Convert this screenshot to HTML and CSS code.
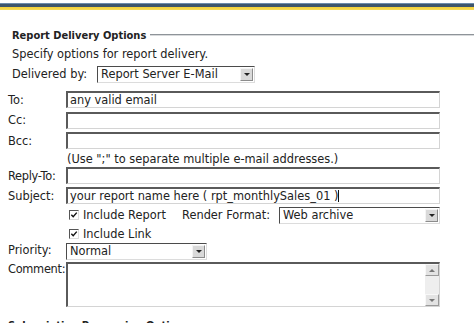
FILE: index.html
```html
<!DOCTYPE html>
<html lang="en">
<head>
  <meta charset="UTF-8">
  <title>Report Delivery Options</title>
  <link rel="stylesheet" href="styles.css">
</head>
<body>
  <div class="topbar"></div>

  <div class="options">
    <div class="legend">
      <span class="legend-title">Report Delivery Options</span>
      <span class="legend-rule"></span>
    </div>
    <div class="intro">Specify options for report delivery.</div>
    <div class="delivered">
      <span class="delivered-label">Delivered by:</span>
      <div class="select select-ext">
        <span class="select-value">Report Server E-Mail</span>
        <span class="select-btn"><span class="arrow"></span></span>
      </div>
    </div>
  </div>

  <div class="fields">
    <div class="row row-to">
      <span class="label">To:</span>
      <div class="field">any valid email</div>
    </div>
    <div class="row row-cc">
      <span class="label">Cc:</span>
      <div class="field"></div>
    </div>
    <div class="row row-bcc">
      <span class="label">Bcc:</span>
      <div class="field"></div>
    </div>
    <div class="row row-note">
      <span class="label"></span>
      <span class="note">(Use ";" to separate multiple e-mail addresses.)</span>
    </div>
    <div class="row row-reply">
      <span class="label tight">Reply-To:</span>
      <div class="field"></div>
    </div>
    <div class="row row-subject">
      <span class="label">Subject:</span>
      <div class="field">your report name here ( rpt_monthlySales_01 )<span class="caret"></span></div>
    </div>
    <div class="row row-check">
      <span class="label"></span>
      <span class="check"><svg viewBox="0 0 9 9" width="9" height="9"><path d="M1.5 4.2 L3.6 6.4 L7.6 1.8" fill="none" stroke="#111" stroke-width="1.6"/></svg></span>
      <span class="check-text check-report">Include Report</span>
      <span class="render-label">Render Format:</span>
      <div class="select select-format">
        <span class="select-value">Web archive</span>
        <span class="select-btn"><span class="arrow"></span></span>
      </div>
    </div>
    <div class="row row-check2">
      <span class="label"></span>
      <span class="check"><svg viewBox="0 0 9 9" width="9" height="9"><path d="M1.5 4.2 L3.6 6.4 L7.6 1.8" fill="none" stroke="#111" stroke-width="1.6"/></svg></span>
      <span class="check-text">Include Link</span>
    </div>
    <div class="row row-priority">
      <span class="label">Priority:</span>
      <div class="select select-priority">
        <span class="select-value">Normal</span>
        <span class="select-btn"><span class="arrow"></span></span>
      </div>
    </div>
    <div class="row row-comment">
      <span class="label tight">Comment:</span>
      <div class="textarea">
        <div class="scroll">
          <span class="scroll-btn"><span class="arrow up"></span></span>
          <span class="scroll-track"></span>
          <span class="scroll-btn"><span class="arrow"></span></span>
        </div>
      </div>
    </div>
    <div class="next-section">Subscription Processing Options</div>
  </div>
</body>
</html>
```

FILE: styles.css
```css
* {
  box-sizing: border-box;
  margin: 0;
  padding: 0;
}
html, body {
  width: 474px;
  height: 323px;
  overflow: hidden;
  background: #fff;
}
body {
  font-family: "DejaVu Sans", Verdana, sans-serif;
  font-size: 11.4px;
  color: #222;
}
/* Top stripe */
.topbar {
  height: 10px;
  border-top: 3px solid #fff;
  background: linear-gradient(#6d8bab 0, #6d8bab 1px, #3e566c 1px, #3e566c 4px, #f3cf35 4px, #f7dc5a 7px);
}
/* Legend block */
.options {
  padding-left: 12px;
}
.legend {
  display: flex;
  align-items: center;
  height: 20px;
  margin-top: 15px;
}
.legend-title {
  font-family: "DejaVu Sans Condensed", "DejaVu Sans", sans-serif;
  font-weight: bold;
  font-size: 11px;
}
.legend-rule {
  flex: 1;
  height: 2px;
  margin-left: 4px;
  border-top: 1px solid #8e9499;
  border-bottom: 1px solid #d8dadc;
}
.intro {
  height: 18px;
  line-height: 18px;
}
.delivered {
  display: flex;
  align-items: center;
  height: 22px;
}
.delivered-label {
  width: 85px;
}
/* Fake selects */
.select {
  display: flex;
  height: 17px;
  border-top: 1px solid #4b4b4b;
  border-left: 1px solid #4b4b4b;
  border-right: 1px solid #dcdcdc;
  border-bottom: 1px solid #dcdcdc;
  background: #fff;
}
.select-value {
  flex: 1;
  padding-left: 3px;
  line-height: 15px;
  white-space: nowrap;
}
.select-btn {
  width: 13px;
  margin: 1px;
  background: #d9d9d9;
  border: 1px solid #f4f4f4;
  border-right-color: #8c8c8c;
  border-bottom-color: #8c8c8c;
  display: flex;
  align-items: center;
  justify-content: center;
}
.arrow {
  width: 0;
  height: 0;
  border-left: 3px solid transparent;
  border-right: 3px solid transparent;
  border-top: 3px solid #222;
}
.arrow.up {
  border-top: 0;
  border-bottom: 3px solid #777;
}
.select-ext {
  width: 158px;
}
.select-format {
  width: 161px;
}
.select-priority {
  width: 141px;
}
/* Form rows */
.fields {
  padding-left: 8px;
  margin-top: 4px;
}
.row {
  display: flex;
  align-items: center;
}
.label {
  width: 58px;
  flex-shrink: 0;
  white-space: nowrap;
}
.label.tight {
  letter-spacing: -0.3px;
}
.field {
  width: 374px;
  height: 17px;
  padding-left: 2px;
  line-height: 15px;
  border-top: 2px solid #5a5a5a;
  border-left: 2px solid #5a5a5a;
  border-right: 1px solid #d4d4d4;
  border-bottom: 1px solid #d4d4d4;
  white-space: nowrap;
}
.caret {
  display: inline-block;
  width: 1px;
  height: 12px;
  background: #111;
  vertical-align: -2px;
}
.row-to { height: 21px; }
.row-cc { height: 20px; }
.row-bcc { height: 21px; }
.row-note { height: 15px; }
.row-note .note { margin-left: 1px; }
.row-reply { height: 19px; }
.row-subject { height: 21px; }
.row-check { height: 18px; }
.row-check2 { height: 19px; }
.row-priority { height: 18px; align-items: flex-start; }
.check {
  width: 10px;
  height: 10px;
  margin-left: 3px;
  border-top: 1px solid #555;
  border-left: 1px solid #555;
  border-right: 1px solid #ddd;
  border-bottom: 1px solid #ddd;
  display: flex;
  align-items: center;
  justify-content: center;
}
.check svg {
  width: 8px;
  height: 8px;
}
.check-text {
  margin-left: 4px;
}
.check-report {
  width: 99px;
}
.render-label {
  width: 97px;
  white-space: nowrap;
}
/* Comment box */
.row-comment {
  align-items: flex-start;
  height: 45px;
  margin-top: 1px;
}
.textarea {
  width: 374px;
  height: 45px;
  border-top: 2px solid #5a5a5a;
  border-left: 2px solid #5a5a5a;
  border-right: 1px solid #d4d4d4;
  border-bottom: 1px solid #d4d4d4;
  display: flex;
  justify-content: flex-end;
}
.scroll {
  width: 14px;
  display: flex;
  flex-direction: column;
  background: #eeeeee;
}
.scroll-btn {
  height: 12px;
  background: #e3e3e3;
  border: 1px solid #f8f8f8;
  border-right-color: #9a9a9a;
  border-bottom-color: #9a9a9a;
  display: flex;
  align-items: center;
  justify-content: center;
}
.scroll-btn .arrow {
  border-top-color: #777;
}
.scroll-track {
  flex: 1;
}
.next-section {
  margin-top: 12px;
  font-weight: bold;
  font-size: 11px;
  font-family: "DejaVu Sans Condensed", "DejaVu Sans", sans-serif;
}
```
